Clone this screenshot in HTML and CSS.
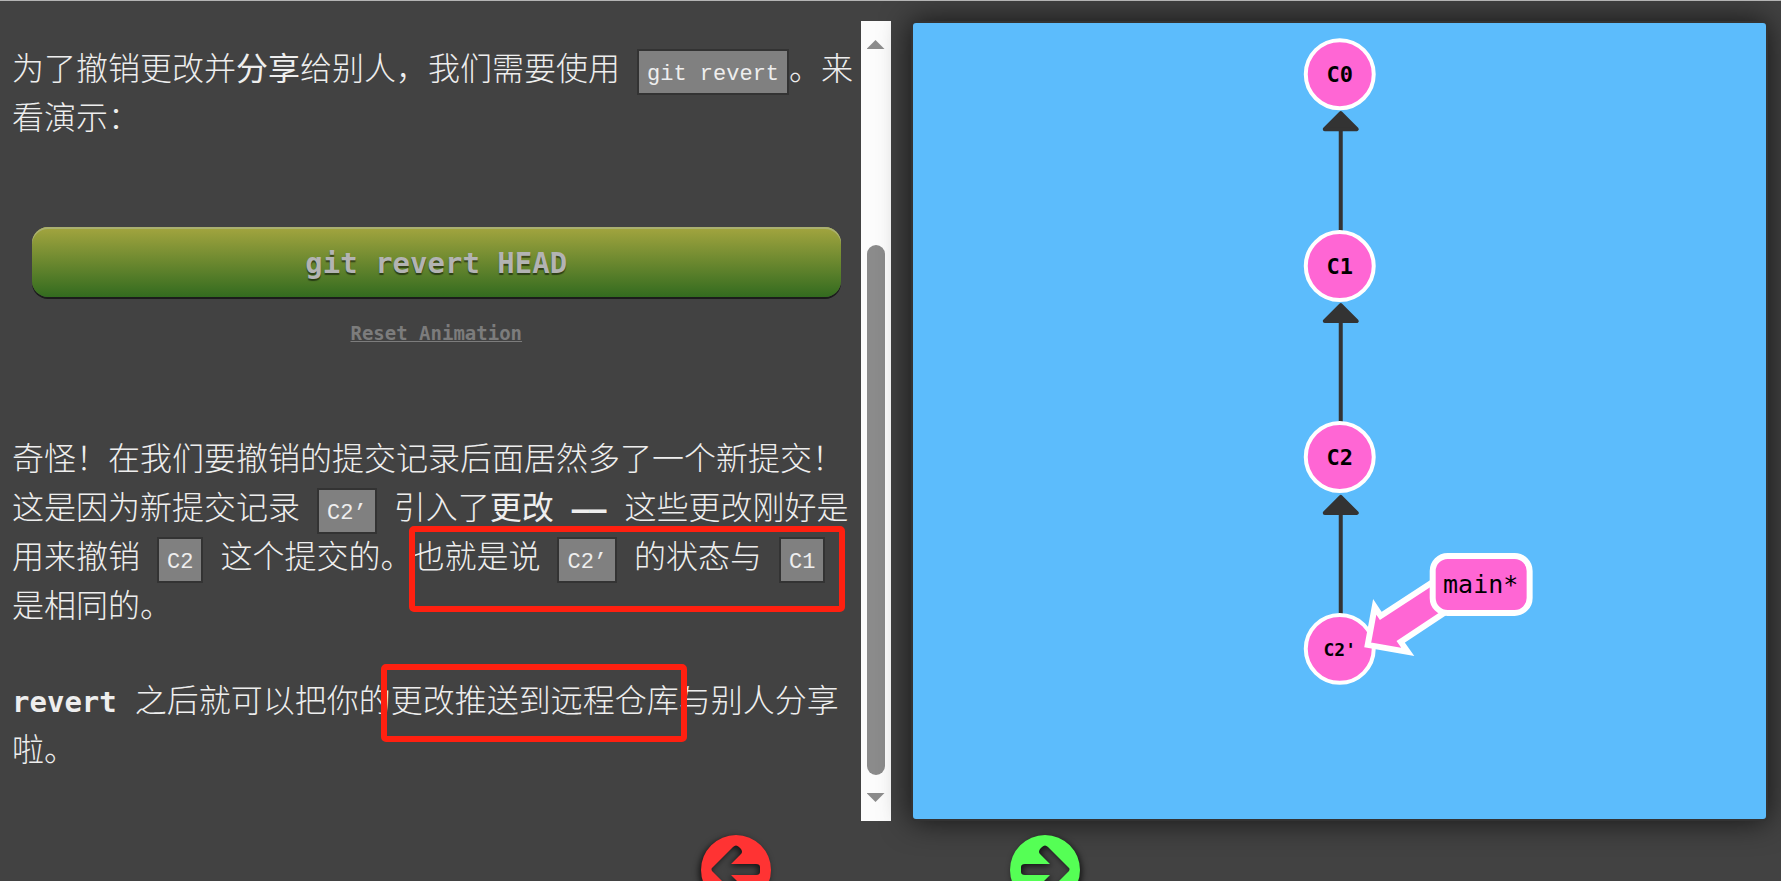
FILE: index.html
```html
<!DOCTYPE html>
<html lang="zh-CN">
<head>
    <meta charset="UTF-8">
    <meta name="viewport" content="width=device-width, initial-scale=1.0">
    <title>Learn Git Branching</title>
    <link rel="stylesheet" href="styles.css">
</head>
<body>
    <div class="demo">
        <div class="text-side">
            <div class="text-content">
                <p class="before-text">为了撤销更改并<strong>分享</strong>给别人，我们需要使用<code class="no-gap">git revert</code>。来看演示：</p>

                <button type="button" class="command-btn">git revert HEAD</button>
                <a href="#" class="reset-link">Reset Animation</a>

                <p class="after-text">奇怪！在我们要撤销的提交记录后面居然多了一个新提交！这是因为新提交记录<code>C2’</code>引入了<strong>更改</strong><b class="dash">——</b>这些更改刚好是用来撤销<code>C2</code>这个提交的。也就是说<code>C2’</code>的状态与<code>C1</code>是相同的。<span class="mark mark-state"></span></p>

                <p class="after-text"><b class="latin">revert</b>之后就可以把你的更改推送到远程仓库与别人分享啦。<span class="mark mark-push"></span></p>
            </div>

            <!-- Scrollbar -->
            <div class="scrollbar" aria-hidden="true">
                <div class="scroll-up"></div>
                <div class="scroll-track">
                    <div class="scroll-thumb"></div>
                </div>
                <div class="scroll-down"></div>
            </div>
        </div>

        <!-- Commit tree -->
        <div class="tree-side">
            <svg class="tree" viewBox="0 0 854 796">
                <g class="edge">
                    <path d="M428 208V106M428 400V298M428 591V490"/>
                    <path class="edge-head" d="M428 90L444 106H412Z"/>
                    <path class="edge-head" d="M428 282L444 298H412Z"/>
                    <path class="edge-head" d="M428 474L444 490H412Z"/>
                </g>
                <g class="commit">
                    <circle cx="427" cy="51" r="34"/>
                    <circle cx="427" cy="243" r="34"/>
                    <circle cx="427" cy="434" r="34"/>
                    <circle cx="427" cy="626" r="34"/>
                    <text x="427" y="59">C0</text>
                    <text x="427" y="251">C1</text>
                    <text x="427" y="442">C2</text>
                    <text class="small" x="427" y="633">C2'</text>
                </g>
                <g class="branch">
                    <path d="M540 546L468 593L462 584L455 622L495 629L488 619L548 579"/>
                    <rect x="520" y="533" width="97" height="57" rx="15"/>
                    <text x="568" y="570">main*</text>
                </g>
            </svg>
        </div>
    </div>

    <!-- Previous / next slide -->
    <div class="controls">
        <button type="button" class="nav-btn prev" aria-label="Previous">
            <svg viewBox="0 0 70 70">
                <path fill-rule="evenodd" d="M35 0a35 35 0 1 0 0 70a35 35 0 1 0 0-70ZM11 33L32 12Q35 9 38 12L40 14Q42 17 40 19L30 29H55Q59 29 59 32V37Q59 40 55 40H30L40 50Q42 52 40 55L38 57Q35 60 32 57L11 36Q10 34 11 33Z"/>
            </svg>
        </button>
        <button type="button" class="nav-btn next" aria-label="Next">
            <svg viewBox="0 0 70 70">
                <path fill-rule="evenodd" d="M35 0a35 35 0 1 0 0 70a35 35 0 1 0 0-70ZM59 33L38 12Q35 9 32 12L30 14Q28 17 30 19L40 29H15Q11 29 11 32V37Q11 40 15 40H40L30 50Q28 52 30 55L32 57Q35 60 38 57L59 36Q60 34 59 33Z"/>
            </svg>
        </button>
    </div>
</body>
</html>
```
FILE: styles.css
```css
* {
    box-sizing: border-box;
}

body {
    margin: 0;
    height: 100vh;
    overflow: hidden;
    display: flex;
    flex-direction: column;
    background-color: #424242;
    border-top: 1px solid #b4b4b4;
    color: #eee;
    font-family: "DejaVu Sans Mono", "Noto Sans CJK SC", monospace;
}

.demo {
    flex: 1;
    min-height: 0;
    display: flex;
    padding-top: 20px;
}

/* Left side, text and scrollbar */
.text-side {
    width: 50%;
    display: flex;
}

.text-content {
    flex: 1;
    min-width: 0;
    padding: 21px 0 0 12px;
    overflow: hidden;
}

.text-content p {
    position: relative;
    margin: 0 0 46px;
    font-family: "Noto Sans CJK SC", sans-serif;
    font-size: 32px;
    font-weight: 300;
    line-height: 49px;
}

.text-content .before-text {
    margin-bottom: 87px;
}

.text-content strong {
    font-weight: 400;
}

.text-content code {
    margin: 0 17px;
    padding: 11px 8px 6px;
    border: 2px solid #333;
    background-color: #808080;
    font-family: "Liberation Mono", monospace;
    font-size: 22px;
    font-weight: normal;
    line-height: 24px;
}

.text-content code.no-gap {
    margin-right: 0;
}

.dash,
.latin {
    font-family: "DejaVu Sans Mono", monospace;
    font-size: 29px;
    font-weight: bold;
    line-height: 24px;
}

.dash {
    margin: 0 18px;
}

.latin {
    margin-right: 18px;
}

/* Red boxes drawn over the text */
.mark {
    position: absolute;
    border: 6px solid #ff2010;
    border-radius: 5px;
}

.mark-state {
    top: 94px;
    left: 397px;
    width: 436px;
    height: 86px;
}

.mark-push {
    top: -10px;
    left: 369px;
    width: 306px;
    height: 78px;
}

.command-btn {
    display: block;
    width: calc(100% - 40px);
    height: 70px;
    margin: 0 20px;
    padding: 2px 0 0;
    border: none;
    border-radius: 16px;
    background: linear-gradient(#a3a53f, #336b1f);
    box-shadow: inset 0 2px 0 #aab070, 0 2px 0 #1c1c1c;
    color: #b3b3b3;
    font-family: inherit;
    font-size: 29px;
    font-weight: bold;
    text-shadow: 0 2px 1px rgba(0, 0, 0, 0.5);
    cursor: pointer;
}

.reset-link {
    display: block;
    margin: 24px 0 87px;
    color: #7c7c7c;
    font-size: 19px;
    font-weight: bold;
    line-height: 24px;
    text-align: center;
}

.scrollbar {
    width: 30px;
    padding: 19px 6px;
    display: flex;
    flex-direction: column;
    background-color: #fcfcfc;
}

.scroll-up,
.scroll-down {
    height: 9px;
    background-color: #8b8b8b;
}

.scroll-up {
    clip-path: polygon(50% 0, 100% 100%, 0 100%);
}

.scroll-down {
    clip-path: polygon(0 0, 100% 0, 50% 100%);
}

.scroll-track {
    flex: 1;
    display: flex;
    align-items: flex-end;
    padding-bottom: 18px;
}

.scroll-thumb {
    width: 100%;
    height: 73%;
    border-radius: 9px;
    background-color: #8b8b8b;
}

/* Right side, commit tree */
.tree-side {
    flex: 1;
    min-width: 0;
    margin: 0 13px 0 20px;
    border: 2px solid #333;
    border-radius: 5px;
    background-color: #5cbcfc;
    box-shadow: 0 0 30px rgba(0, 0, 0, 0.7);
}

.tree {
    display: block;
    width: 100%;
    height: 100%;
}

.edge path {
    fill: none;
    stroke: #333;
    stroke-width: 4;
}

.edge .edge-head {
    fill: #333;
    stroke-linejoin: round;
}

.commit circle {
    fill: #ff66d4;
    stroke: #fff;
    stroke-width: 4;
}

.commit text {
    font-size: 22px;
    font-weight: bold;
    text-anchor: middle;
}

.commit .small {
    font-size: 18px;
}

.branch path,
.branch rect {
    fill: #ff66d4;
    stroke: #fff;
    stroke-width: 6;
}

.branch text {
    font-size: 25px;
    text-anchor: middle;
}

/* Bottom arrows */
.controls {
    height: 60px;
    padding-top: 14px;
    display: flex;
    justify-content: center;
    gap: 239px;
}

.nav-btn {
    width: 70px;
    height: 70px;
    padding: 0;
    border: none;
    background: none;
    cursor: pointer;
}

.nav-btn svg {
    display: block;
    width: 100%;
    height: 100%;
}

.prev svg {
    fill: #ff3333;
    filter: drop-shadow(-2px 2px 3px rgba(0, 0, 0, 0.7));
}

.next svg {
    fill: #55ff55;
    filter: drop-shadow(2px 2px 3px rgba(0, 0, 0, 0.7));
}
```
